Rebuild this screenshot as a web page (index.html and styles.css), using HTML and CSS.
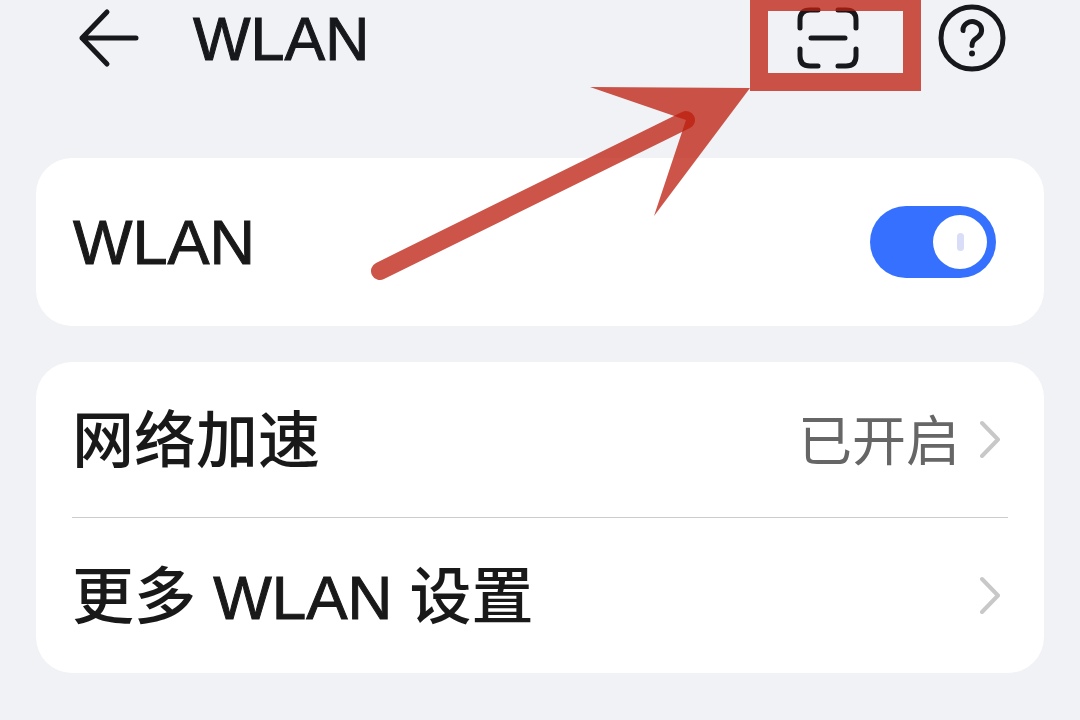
FILE: index.html
```html
<!DOCTYPE html>
<html lang="zh-CN">
<head>
  <meta charset="UTF-8">
  <meta name="viewport" content="width=device-width, initial-scale=1.0">
  <title>WLAN</title>
  <link rel="stylesheet" href="styles.css">
</head>
<body>

<header class="top-bar">
  <button class="icon-btn back" type="button" aria-label="返回">
    <svg width="60" height="60" viewBox="0 0 60 60">
      <path d="M28 4 L3 30 L28 56 M3 30 H57"/>
    </svg>
  </button>
  <h1 class="title">WLAN</h1>
  <button class="icon-btn scan" type="button" aria-label="扫一扫">
    <svg width="60" height="60" viewBox="0 0 60 60">
      <path d="M20 2 H12 Q2 2 2 12 V20 M40 2 H48 Q58 2 58 12 V20 M2 41 V48 Q2 58 12 58 H20 M40 58 H48 Q58 58 58 48 V41 M13 30 H47"/>
    </svg>
  </button>
  <button class="icon-btn" type="button" aria-label="帮助">
    <svg width="66" height="66" viewBox="0 0 66 66">
      <circle cx="33" cy="33" r="31"/>
      <path d="M24 25.500 A9.300 8.500 0 1 1 39.500 31.500 C35.500 34.500 33 36 33 40.500"/>
      <circle class="dot" cx="33" cy="48.500" r="3"/>
    </svg>
  </button>
</header>

<main class="settings">
  <section class="card">
    <div class="row row-switch">
      <label class="label latin" for="wlan">WLAN</label>
      <input class="switch" type="checkbox" role="switch" id="wlan" checked>
    </div>
  </section>

  <section class="card card-list">
    <button class="row" type="button">
      <span class="label">网络加速</span>
      <span class="value">已开启</span>
      <svg class="chevron" width="20" height="40" viewBox="0 0 20 40">
        <path d="M2 3 L18 19.500 L2 36"/>
      </svg>
    </button>
    <hr class="divider">
    <button class="row" type="button">
      <span class="label">更多 <span class="latin">WLAN</span> 设置</span>
      <svg class="chevron" width="20" height="40" viewBox="0 0 20 40">
        <path d="M2 3 L18 19.500 L2 36"/>
      </svg>
    </button>
  </section>
</main>

<!-- red arrow and frame pointing at the scan button -->
<svg class="marker" width="551" height="290" viewBox="0 0 551 290" aria-hidden="true">
  <path class="frame" d="M380 0 H551 V91 H380 Z M398 11 V73 H533 V11 Z"/>
  <path class="shaft" d="M10 271 L316 120"/>
  <path class="head" d="M220 87 L380 88 L284 216 L316 120 Z"/>
</svg>

</body>
</html>
```
FILE: styles.css
```css
* {
  box-sizing: border-box;
}

body {
  position: relative;
  margin: 0;
  min-height: 100vh;
  background: #f1f2f6;
  color: #191919;
  font-family: "Liberation Sans", "Noto Sans CJK SC", sans-serif;
}

button {
  margin: 0;
  border: 0;
  background: none;
  color: inherit;
  font: inherit;
  cursor: pointer;
}

.top-bar {
  display: flex;
  align-items: center;
  height: 76px;
  padding: 0 75px 0 79px;
}

.icon-btn {
  padding: 0;
}

.icon-btn svg {
  display: block;
  overflow: visible;
  fill: none;
  stroke: #17181c;
  stroke-width: 5;
  stroke-linecap: round;
  stroke-linejoin: round;
}

.icon-btn .dot {
  fill: #17181c;
  stroke: none;
}

.title {
  flex: 1;
  margin: 0 0 0 54px;
  padding-top: 2px;
  color: #17181c;
  font-size: 61px;
  font-weight: 400;
  line-height: 74px;
  -webkit-text-stroke: 1px currentColor;
}

.scan {
  margin-right: 81px;
}

.settings {
  display: flex;
  flex-direction: column;
  gap: 36px;
  padding: 82px 36px 47px;
}

.card {
  padding: 0 36px;
  border-radius: 36px;
  background: #fff;
}

.row {
  display: flex;
  align-items: center;
  width: 100%;
  height: 155px;
  padding: 0 8px 0 0;
  text-align: left;
}

.row-switch {
  height: 168px;
  padding: 0 12px 0 1px;
}

.label {
  flex: 1;
  font-size: 63px;
  font-weight: 500;
  line-height: 80px;
}

.latin {
  font-weight: 400;
  -webkit-text-stroke: 1px currentColor;
}

.value {
  margin-right: 20px;
  color: #666;
  font-size: 54px;
  line-height: 80px;
}

/* Chinese glyphs sit high in the line, push them down to the chevron */
.card-list .label,
.card-list .value {
  padding-top: 4px;
}

.card-list .label {
  font-size: 62px;
}

.chevron {
  fill: none;
  stroke: #c8c8c8;
  stroke-width: 4;
  stroke-linecap: round;
  stroke-linejoin: round;
}

.divider {
  height: 1px;
  margin: 0;
  border: 0;
  background: #ccc;
}

.switch {
  appearance: none;
  position: relative;
  display: flex;
  align-items: center;
  width: 126px;
  height: 72px;
  margin: 0;
  padding: 9px;
  border-radius: 36px;
  background: #bbb;
  cursor: pointer;
}

.switch:checked {
  justify-content: flex-end;
  background: #3570fe;
}

.switch::before {
  content: "";
  width: 54px;
  height: 54px;
  border-radius: 50%;
  background: #fff;
}

/* small bar in the middle of the knob */
.switch:checked::after {
  content: "";
  position: absolute;
  top: 27px;
  right: 32px;
  width: 7px;
  height: 18px;
  border-radius: 4px;
  background: #d9ddf8;
}

.marker {
  position: absolute;
  top: 0;
  right: 159px;
  fill: #bc1e0e;
  pointer-events: none;
}

.frame,
.shaft,
.head {
  opacity: 0.76;
}

.shaft {
  fill: none;
  stroke: #bc1e0e;
  stroke-width: 18;
  stroke-linecap: round;
}
```
